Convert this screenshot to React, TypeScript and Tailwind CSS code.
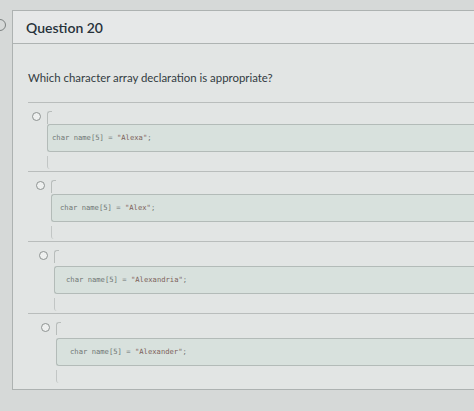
import React from "react";

const options = [
  { str: '"Alexa"', indent: "ml-[0px]", box: "mt-[0px]" },
  { str: '"Alex"', indent: "ml-[4px]", box: "mt-[1px]" },
  { str: '"Alexandria"', indent: "ml-[7px]", box: "mt-[3px]" },
  { str: '"Alexander"', indent: "ml-[9px]", box: "mt-[3px]" },
];

function Option({ str, indent, box, last }: { str: string; indent: string; box: string; last: boolean }) {
  return (
    <div className={`flex pt-[8px] ${last ? "pb-[14px]" : "pb-[2px] border-b border-[#b9bdbc]"}`}>
      <div className={`flex ${indent}`}>
        <div className="mt-[1px] ml-[4px] w-[9px] h-[9px] rounded-full border border-[#8e9392] bg-[#eef0ef]" />
      </div>
      <div className={`flex-1 flex flex-col ml-[6px]`}>
        <div className={`h-[13px] w-[5px] border-l border-t border-[#b8bdbb] rounded-tl-[3px]`} />
        <div className={`${box} h-[28px] flex items-center border border-[#b3bbb8] rounded-l-[3px] bg-[#d8e1dd] border-r-0`}>
          <span
            className={`${indent} pl-[4px] text-[7.2px] text-[#6f7674] whitespace-pre`}
            style={{ fontFamily: '"DejaVu Sans Mono", "Liberation Mono", monospace' }}
          >
            char name[5] = <span className="text-[#7d615b]">{str}</span>;
          </span>
        </div>
        <div className="mt-[4px] h-[13px] w-[5px] border-l border-[#c2c6c5] rounded-bl-[3px]" />
      </div>
    </div>
  );
}

export default function App() {
  return (
    <div
      className="w-[474px] h-[411px] overflow-hidden bg-[#d6d9d8] relative"
      style={{ fontFamily: 'Lato, "Open Sans", sans-serif' }}
    >
      <div className="absolute left-[-6px] top-[19px] w-[12px] h-[12px] rounded-full border-[1.5px] border-[#7c8180]" />
      <div className="ml-[12px] mt-[10px] h-[380px] border-l border-t border-b border-[#adb2b1] bg-[#e2e5e4]">
        <div className="h-[33px] flex items-center pl-[13px] bg-[#e6e8e8] border-b border-[#aeb3b2]">
          <span className="text-[14px] font-semibold text-[#27323a]">Question 20</span>
        </div>
        <div className="pl-[15px]">
          <div className="pt-[26px] h-[58px] text-[11.4px] text-[#333c42] leading-[16px]">
            Which character array declaration is appropriate?
          </div>
          <div className="border-t border-[#b9bdbc]">
            {options.map((o, i) => (
              <Option key={i} str={o.str} indent={o.indent} box={o.box} last={i === options.length - 1} />
            ))}
          </div>
        </div>
      </div>
    </div>
  );
}
